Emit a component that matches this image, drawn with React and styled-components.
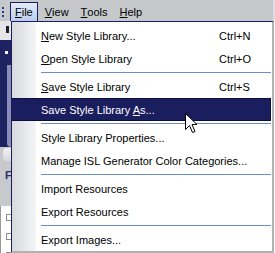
import React from "react";
import styled, { createGlobalStyle } from "styled-components";

const GlobalStyle = createGlobalStyle`
  html, body {
    margin: 0;
    padding: 0;
    overflow: hidden;
    background: #ffffff;
  }
  body {
    font-family: "Liberation Sans", Arial, sans-serif;
    font-size: 11px;
  }
`;

const Screen = styled.div`
  position: relative;
  width: 275px;
  height: 253px;
  overflow: hidden;
  display: flex;
  flex-direction: column;
  background: #ffffff;
`;

const MenuBar = styled.div`
  height: 21px;
  flex: none;
  display: flex;
  align-items: stretch;
  padding: 2px 0 0 2px;
  box-sizing: border-box;
  background: #c7c8cc;
  border-right: 2px solid #dcdde0;
`;

const Grip = styled.div`
  width: 3px;
  margin: 5px 5px 0 0;
  height: 12px;
  background: radial-gradient(circle at 1px 1px, #2b3a8c 1px, transparent 1.2px) 0 0 / 3px 4px repeat-y;
`;

const Title = styled.div`
  display: flex;
  align-items: center;
  padding: 0 4px 1px 4px;
  margin-right: 2px;
  color: #000;
  border: 1px solid ${p => (p.$open ? "#1b1e5e" : "transparent")};
  border-bottom: none;
  background: ${p => (p.$open ? "linear-gradient(#e3eaf7, #b9cdec)" : "transparent")};
  position: relative;
  z-index: 2;
`;

const Key = styled.span`
  text-decoration: underline;
  text-underline-offset: 1px;
`;

const Body = styled.div`
  flex: 1;
  display: flex;
`;

const Sidebar = styled.div`
  width: 11px;
  display: flex;
  flex-direction: column;
`;

const TopPane = styled.div`
  height: 19px;
  background: #e6e6e8;
  display: flex;
  align-items: flex-start;
  padding: 5px 0 0 6px;
  box-sizing: border-box;
`;

const Glyph = styled.div`
  width: 3px;
  height: 7px;
  background: #1e1e2a;
`;

const NavyPane = styled.div`
  height: 107px;
  background: #1d2260;
  display: flex;
  flex-direction: column;
  align-items: flex-end;
  padding-top: 11px;
  box-sizing: border-box;
`;

const WhiteDot = styled.div`
  width: 3px;
  height: 3px;
  background: #f4f4f8;
  margin-right: 3px;
`;

const Lavender = styled.div`
  width: 4px;
  flex: 1;
  margin-top: 11px;
  background: #8a8eb6;
  border-bottom-left-radius: 4px;
`;

const GrayPane = styled.div`
  height: 59px;
  background: #c8c9cd;
  display: flex;
  flex-direction: column;
  padding: 1px 0 0 3px;
  box-sizing: border-box;
`;

const PaneButton = styled.div`
  height: 13px;
  border-radius: 4px 0 0 4px;
  background: linear-gradient(#f2f2f4, #d8d8dc);
`;

const PaneLetter = styled.div`
  margin-top: 8px;
  padding-left: 2px;
  font-weight: bold;
  font-size: 11px;
  color: #2a2f6a;
`;

const TreePane = styled.div`
  flex: 1;
  background: #ffffff;
  border-left: 1px solid #9a9a9a;
  display: flex;
  flex-direction: column;
  gap: 12px;
  padding: 8px 0 0 5px;
`;

const TreeBox = styled.div`
  width: 5px;
  height: 5px;
  border: 1px solid #8e8e8e;
  background: #fff;
`;

const Workspace = styled.div`
  flex: 1;
  background: #ffffff;
`;

const Dropdown = styled.div`
  position: absolute;
  left: 11px;
  top: 21px;
  width: 263px;
  height: 232px;
  box-sizing: border-box;
  border-left: 1px solid #1b1e5e;
  border-top: 1px solid #1b1e5e;
  border-right: 2px solid #b2b2b2;
  border-bottom: 2px solid #b2b2b2;
  padding-top: 2px;
  background: linear-gradient(to right, #d7d9de 0, #f4f5f6 24px, #ffffff 24px);
  display: flex;
  flex-direction: column;
  z-index: 1;
`;

const Item = styled.div`
  height: 23px;
  flex: none;
  box-sizing: border-box;
  display: grid;
  grid-template-columns: 178px 1fr;
  align-items: center;
  padding-left: 29px;
  color: ${p => (p.$active ? "#ffffff" : "#000000")};
  background: ${p => (p.$active ? "#1b1e5e" : "transparent")};
  border: 1px solid ${p => (p.$active ? "#0c0e40" : "transparent")};
  border-left-width: 0;
  margin-right: 1px;
  white-space: nowrap;
`;

const Separator = styled.div`
  height: 5px;
  flex: none;
  display: flex;
  align-items: center;
  padding-left: 29px;
  &::after {
    content: "";
    flex: 1;
    height: 1px;
    background: #6a8dd0;
    margin-right: 1px;
  }
`;

const Cursor = styled.svg`
  position: absolute;
  left: 185px;
  top: 113px;
  z-index: 3;
`;

const items = [
  { label: "New Style Library...", key: 0, shortcut: "Ctrl+N" },
  { label: "Open Style Library", key: 0, shortcut: "Ctrl+O" },
  "sep",
  { label: "Save Style Library", key: 0, shortcut: "Ctrl+S" },
  { label: "Save Style Library As...", key: 19, active: true },
  "sep",
  { label: "Style Library Properties..." },
  { label: "Manage ISL Generator Color Categories..." },
  "sep",
  { label: "Import Resources" },
  { label: "Export Resources" },
  "sep",
  { label: "Export Images..." },
];

function Label({ text, at }) {
  if (at === undefined) return <span>{text}</span>;
  return (
    <span>
      {text.slice(0, at)}
      <Key>{text[at]}</Key>
      {text.slice(at + 1)}
    </span>
  );
}

export default function App() {
  return (
    <>
      <GlobalStyle />
      <Screen>
        <MenuBar>
          <Grip />
          <Title $open><Key>F</Key>ile</Title>
          <Title><Key>V</Key>iew</Title>
          <Title><Key>T</Key>ools</Title>
          <Title><Key>H</Key>elp</Title>
        </MenuBar>
        <Body>
          <Sidebar>
            <TopPane><Glyph /></TopPane>
            <NavyPane>
              <WhiteDot />
              <Lavender />
            </NavyPane>
            <GrayPane>
              <PaneButton />
              <PaneLetter>F</PaneLetter>
            </GrayPane>
            <TreePane>
              <TreeBox />
              <TreeBox />
              <TreeBox />
            </TreePane>
          </Sidebar>
          <Workspace />
        </Body>

        <Dropdown>
          {items.map((it, i) =>
            it === "sep" ? (
              <Separator key={i} />
            ) : (
              <Item key={i} $active={it.active}>
                <Label text={it.label} at={it.key} />
                <span>{it.shortcut}</span>
              </Item>
            )
          )}
        </Dropdown>

        <Cursor width="13" height="21" viewBox="0 0 13 21">
          <path
            d="M0.5 0.5 L0.5 16.5 L4.5 12.5 L7.5 19.5 L10 18.5 L7 11.5 L12 11.5 Z"
            fill="#ffffff"
            stroke="#000000"
            strokeWidth="1"
            strokeLinejoin="miter"
          />
        </Cursor>
      </Screen>
    </>
  );
}
